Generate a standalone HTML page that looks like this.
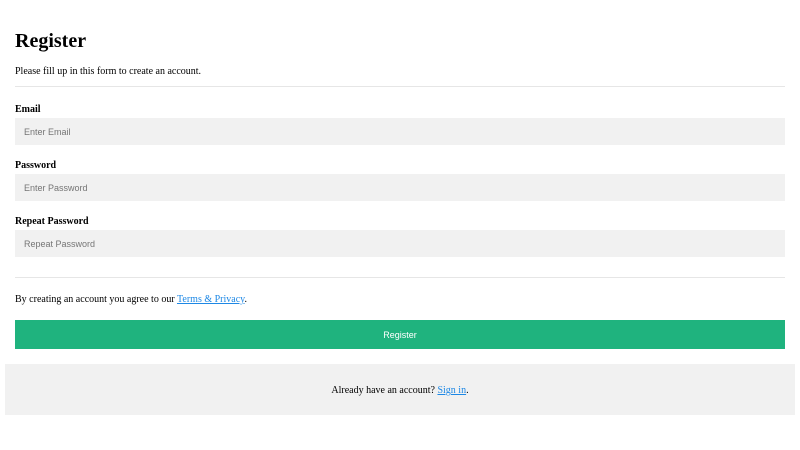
<!DOCTYPE html>
<html><head><style>
*{box-sizing:border-box;margin:0;padding:0}
body{width:800px;height:450px;background:#fff;font-family:"Liberation Serif",serif;font-size:10px;color:#000;position:relative}
.a{position:absolute;left:15px;white-space:nowrap}
h1{font-size:20px;font-weight:bold}
.hr{position:absolute;left:15px;width:770px;height:1px;background:#e6e6e6}
.in{position:absolute;left:15px;width:770px;height:27px;background:#f1f1f1;font-family:"Liberation Sans",sans-serif;font-size:9px;color:#757575;padding-left:9px;line-height:28px}
b{font-size:10px}
a{color:#1e88e5;text-decoration:underline}
.btn{position:absolute;left:15px;top:320px;width:770px;height:29px;background:#1fb37e;color:#fff;font-family:"Liberation Sans",sans-serif;font-size:9px;text-align:center;line-height:30px}
.si{position:absolute;left:5px;top:364px;width:790px;height:51px;background:#f1f1f1;text-align:center;line-height:54px}
</style></head><body>
<h1 class="a" style="top:30px">Register</h1>
<div class="a" style="top:66px">Please fill up in this form to create an account.</div>
<div class="hr" style="top:86px"></div>
<b class="a" style="top:104px">Email</b>
<div class="in" style="top:118px">Enter Email</div>
<b class="a" style="top:160px">Password</b>
<div class="in" style="top:174px">Enter Password</div>
<b class="a" style="top:216px">Repeat Password</b>
<div class="in" style="top:230px">Repeat Password</div>
<div class="hr" style="top:277px"></div>
<div class="a" style="top:294px">By creating an account you agree to our <a>Terms &amp; Privacy</a>.</div>
<div class="btn">Register</div>
<div class="si">Already have an account? <a>Sign in</a>.</div>
</body></html>
